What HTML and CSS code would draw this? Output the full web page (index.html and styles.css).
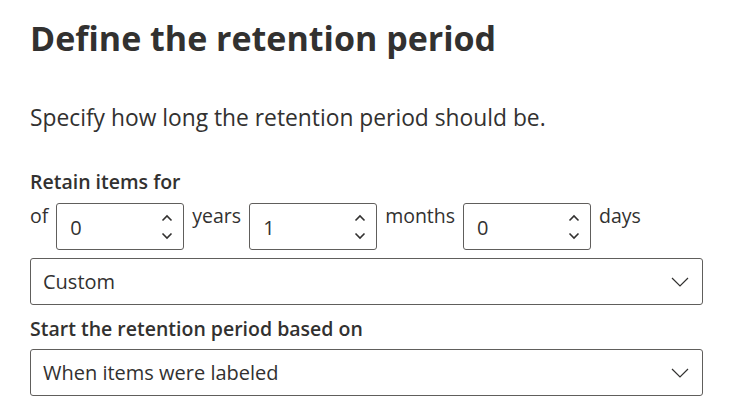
FILE: index.html
```html
<!DOCTYPE html>
<html lang="en">
    <head>
        <meta charset="UTF-8">
        <meta name="viewport" content="width=device-width, initial-scale=1.0">
        <title>Define the retention period</title>
        <link rel="stylesheet" href="styles.css">
    </head>
    <body>
        <div class="page">
            <h1>Define the retention period</h1>
            <p class="intro">Specify how long the retention period should be.</p>

            <div class="label">Retain items for</div>
            <div class="period-row">
                <span class="unit">of</span>
                <div class="spin">
                    <span class="spin-value">0</span>
                    <div class="spin-arrows">
                        <svg width="12" height="8" viewBox="0 0 12 8"><path d="M1.5 6.5 L6 2 L10.5 6.5" fill="none" stroke="#323130" stroke-width="1.6"/></svg>
                        <svg width="12" height="8" viewBox="0 0 12 8"><path d="M1.5 1.5 L6 6 L10.5 1.5" fill="none" stroke="#323130" stroke-width="1.6"/></svg>
                    </div>
                </div>
                <span class="unit">years</span>
                <div class="spin">
                    <span class="spin-value">1</span>
                    <div class="spin-arrows">
                        <svg width="12" height="8" viewBox="0 0 12 8"><path d="M1.5 6.5 L6 2 L10.5 6.5" fill="none" stroke="#323130" stroke-width="1.6"/></svg>
                        <svg width="12" height="8" viewBox="0 0 12 8"><path d="M1.5 1.5 L6 6 L10.5 1.5" fill="none" stroke="#323130" stroke-width="1.6"/></svg>
                    </div>
                </div>
                <span class="unit">months</span>
                <div class="spin">
                    <span class="spin-value">0</span>
                    <div class="spin-arrows">
                        <svg width="12" height="8" viewBox="0 0 12 8"><path d="M1.5 6.5 L6 2 L10.5 6.5" fill="none" stroke="#323130" stroke-width="1.6"/></svg>
                        <svg width="12" height="8" viewBox="0 0 12 8"><path d="M1.5 1.5 L6 6 L10.5 1.5" fill="none" stroke="#323130" stroke-width="1.6"/></svg>
                    </div>
                </div>
                <span class="unit">days</span>
            </div>

            <div class="dropdown">
                <span>Custom</span>
                <svg width="18" height="10" viewBox="0 0 18 10"><path d="M1 1 L9 9 L17 1" fill="none" stroke="#323130" stroke-width="1.2"/></svg>
            </div>

            <div class="label label-start">Start the retention period based on</div>
            <div class="dropdown dropdown-start">
                <span>When items were labeled</span>
                <svg width="18" height="10" viewBox="0 0 18 10"><path d="M1 1 L9 9 L17 1" fill="none" stroke="#323130" stroke-width="1.2"/></svg>
            </div>
        </div>
    </body>
</html>
```

FILE: styles.css
```css
body {
    margin: 0;
    background-color: #ffffff;
    color: #323130;
    font-family: "Open Sans", "Noto Sans", sans-serif;
}
.page {
    padding: 0 38px 0 30px;
}
h1 {
    font-size: 34px;
    font-weight: 700;
    margin: 0;
    padding-top: 14px;
    line-height: 48px;
}
.intro {
    font-size: 22.8px;
    margin: 41px 0 0 0;
    line-height: 30px;
}
.label {
    font-size: 19.5px;
    font-weight: 600;
    margin-top: 36px;
    line-height: 26px;
}
.label-start {
    margin-top: 11px;
}
.period-row {
    display: flex;
    align-items: flex-start;
    gap: 8px;
    margin-top: 8px;
}
.unit {
    font-size: 19.5px;
    line-height: 22px;
    margin-top: 2px;
}
.spin {
    width: 128px;
    height: 47px;
    box-sizing: border-box;
    border: 1px solid #605e5c;
    border-radius: 3px;
    display: flex;
    align-items: center;
    justify-content: space-between;
    padding: 0 10px 0 13px;
}
.spin-value {
    font-size: 20px;
    margin-top: 2px;
}
.spin-arrows {
    display: flex;
    flex-direction: column;
    gap: 10px;
}
.dropdown {
    height: 47px;
    box-sizing: border-box;
    border: 1px solid #605e5c;
    border-radius: 3px;
    margin-top: 8px;
    display: flex;
    align-items: center;
    justify-content: space-between;
    padding: 0 13px 0 12px;
    font-size: 20px;
}
.dropdown-start {
    margin-top: 7px;
}
```
